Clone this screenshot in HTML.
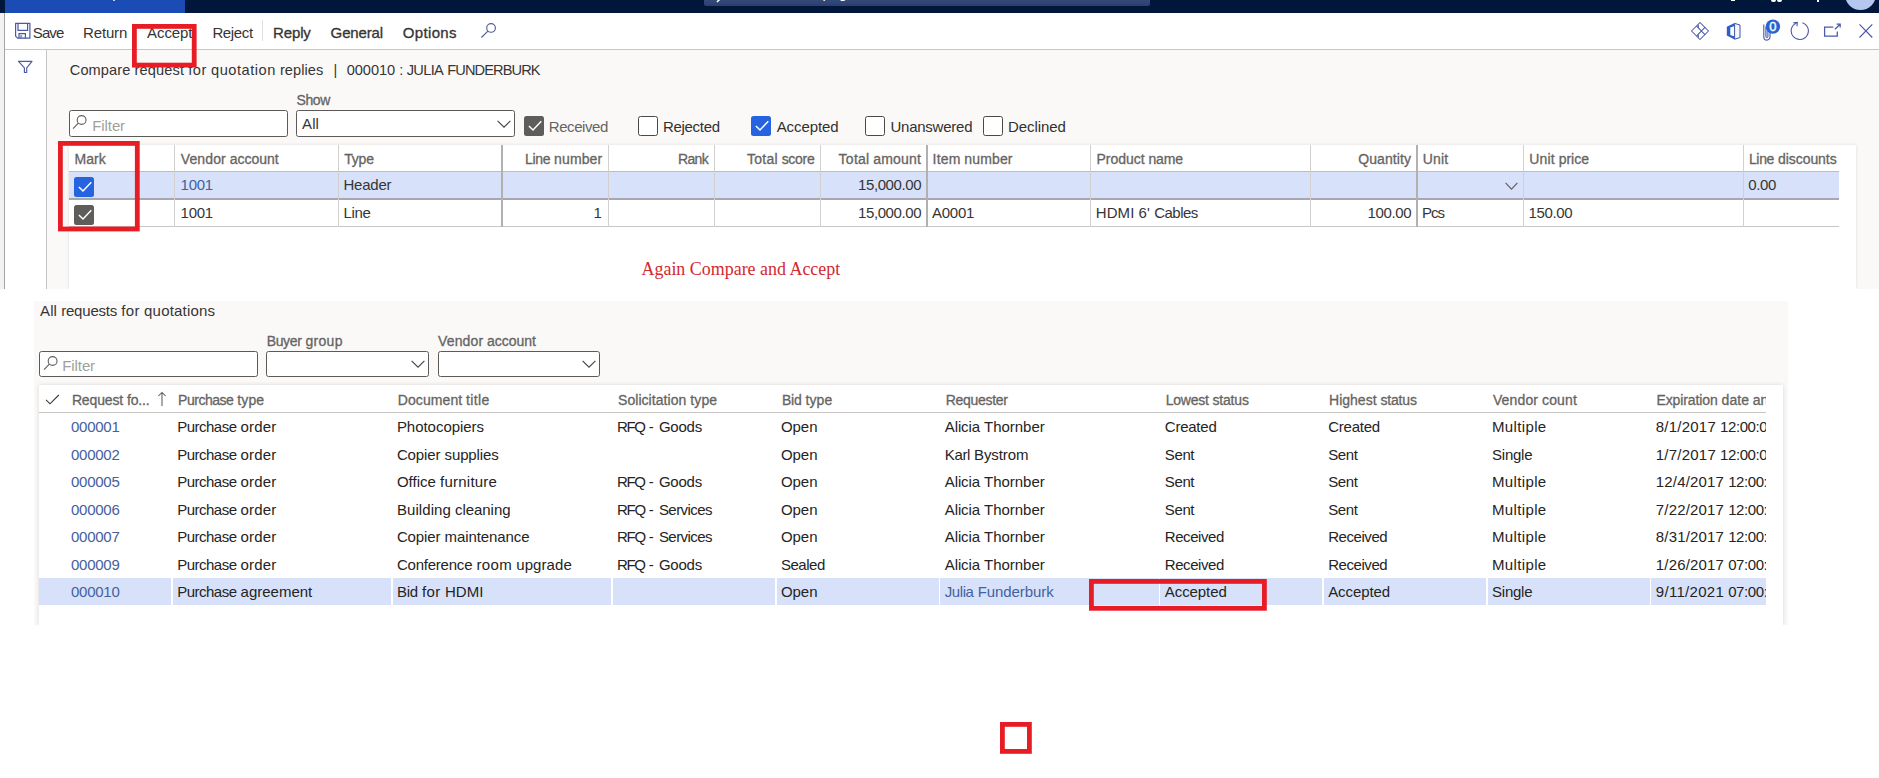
<!DOCTYPE html>
<html lang="en"><head><meta charset="utf-8"><title>Compare request for quotation replies</title>
<style>
html,body{margin:0;padding:0;background:#fff;}
body{width:1879px;height:778px;position:relative;overflow:hidden;font-family:"Liberation Sans",sans-serif;}
.b{position:absolute;display:block;}
.t{position:absolute;white-space:nowrap;line-height:20px;font-family:"Liberation Sans",sans-serif;}
.sb{-webkit-text-stroke:0.32px currentColor;}
.lb{-webkit-text-stroke:0.3px currentColor;}
</style></head><body>
<div class="b" style="left:0.00px;top:0.00px;width:1879.00px;height:12.50px;background:#00163a;overflow:hidden;"><div class="b" style="left:5px;top:0;width:180px;height:12.5px;background:#1b4bb4"></div><div class="b" style="left:112.6px;top:-1px;width:2px;height:1.8px;background:#fff;border-radius:1px"></div><div class="b" style="left:704px;top:0;width:446px;height:6px;background:linear-gradient(#334a7c,#2a3f6c);border-radius:0 0 2px 2px"></div><span class="t" style="left:739.5px;top:-16.7px;font-size:14.5px;color:#fff;">Search for a page</span><svg class="b" style="left:715.5px;top:-11px" width="14" height="14" viewBox="0 0 14 14"><circle cx="8.5" cy="5.5" r="4.2" fill="none" stroke="#fff" stroke-width="1.3"/><path d="M5.5 8.5 L1 13" stroke="#fff" stroke-width="1.5"/></svg><div class="b" style="left:1731px;top:-1px;width:4px;height:2px;background:#fff"></div><div class="b" style="left:1771px;top:-3px;width:5px;height:4.5px;background:#fff;border-radius:2px"></div><div class="b" style="left:1776.6px;top:-3px;width:5px;height:4.5px;background:#fff;border-radius:2px"></div><div class="b" style="left:1817px;top:-1px;width:2.4px;height:2.6px;background:#fff"></div><div class="b" style="left:1845px;top:-21.3px;width:31.4px;height:31.4px;background:#b4c7f1;border-radius:16px"></div></div>
<div class="b" style="left:0.00px;top:12.50px;width:5.00px;height:276.50px;background:#f3f2f1;border-right:1px solid #a6a4a2;box-sizing:border-box;"></div>
<div class="b" style="left:5.00px;top:12.50px;width:1874.00px;height:37.50px;background:#fff;border-bottom:1px solid #c8c6c4;box-sizing:border-box;"></div>
<div class="b" style="left:5.00px;top:50.00px;width:42.00px;height:239.00px;background:#fff;border-right:1px solid #c8c6c4;box-sizing:border-box;"></div>
<div class="b" style="left:47.00px;top:50.00px;width:1832.00px;height:239.00px;background:#faf9f8;"></div>
<svg class="b" style="left:14.00px;top:22.00px;" width="18" height="18" viewBox="0 0 18 18"><path d="M1.6 1.4 H15.9 V16.2 H3.6 L1.6 14.2 Z" fill="none" stroke="#4b59a8" stroke-width="1.2" stroke-linejoin="round"/><path d="M4 1.4 V8.4 H13.6 V1.4" fill="none" stroke="#4b59a8" stroke-width="1.2"/><path d="M5 16.2 V11.6 H11.4 V16.2" fill="none" stroke="#4b59a8" stroke-width="1.2"/><rect x="6.2" y="13" width="2" height="3" fill="#4b59a8" opacity=".6"/></svg>
<span class="t" style="top:22.60px;font-size:15.0px;color:#363534;letter-spacing:-0.893px;left:32.80px;">Save</span>
<span class="t" style="top:22.60px;font-size:15.0px;color:#363534;letter-spacing:-0.166px;left:83.10px;">Return</span>
<span class="t" style="top:22.60px;font-size:15.0px;color:#363534;letter-spacing:-0.098px;left:147.10px;">Accept</span>
<span class="t" style="top:22.60px;font-size:15.0px;color:#363534;letter-spacing:-0.369px;left:212.40px;">Reject</span>
<div class="b" style="left:262.00px;top:19.50px;width:1.00px;height:21.00px;background:#e1dfdd;"></div>
<span class="t sb" style="top:22.60px;font-size:15.0px;color:#363534;letter-spacing:-0.153px;left:273.10px;">Reply</span>
<span class="t sb" style="top:22.60px;font-size:15.0px;color:#363534;letter-spacing:-0.134px;left:330.60px;">General</span>
<span class="t sb" style="top:22.60px;font-size:15.0px;color:#363534;letter-spacing:0.335px;left:402.80px;">Options</span>
<svg class="b" style="left:480.00px;top:22.00px;" width="18" height="18" viewBox="0 0 18 18"><circle cx="11.05" cy="5.9" r="4.35" fill="none" stroke="#585b9e" stroke-width="1.15"/><path d="M7.9 9.1 L1.4 15.5" stroke="#585b9e" stroke-width="1.2"/></svg>
<svg class="b" style="left:1691.00px;top:22.00px;" width="18" height="18" viewBox="0 0 18 18"><g fill="none" stroke="#4b59a8" stroke-width="1.05" stroke-linejoin="round"><path d="M0.5 9 L9 0.5 L17.5 9 L9 17.5 Z"/><path d="M5.6 4.2 L14.2 12.8 M14.2 5.2 L5.6 13.8"/><path d="M7.4 2.6 L7.2 5.8 M7.2 12.2 L7.4 15.6"/></g></svg>
<svg class="b" style="left:1726.00px;top:22.00px;" width="16" height="18" viewBox="0 0 16 18"><path d="M0.8 4.7 L8.6 1.0 V3.9 L4.3 5.5 V13.0 L8.6 14.4 V17.4 L0.8 13.6 Z" fill="#2b5fc9"/><path d="M8.6 1.4 L14.0 3.0 V15.6 L8.6 17.2 Z" fill="#f4f7ff" stroke="#3e52a8" stroke-width="1"/></svg>
<svg class="b" style="left:1760.00px;top:18.00px;" width="24" height="24" viewBox="0 0 24 24"><path d="M3.8 6.4 V19 a3.1 3.1 0 0 0 6.2 0 V9" fill="none" stroke="#4b59a8" stroke-width="1.1"/><path d="M5.8 9 V18.6 a1.1 1.1 0 0 0 2.2 0 V9 Z" fill="#b9c6ee" stroke="#4b59a8" stroke-width="0.9"/><circle cx="12.9" cy="8.6" r="7.2" fill="#2a62d0"/><text x="12.9" y="13.2" style="font-family:'Liberation Sans',sans-serif;font-size:13px" fill="#fff" stroke="#fff" stroke-width="0.35" text-anchor="middle">0</text></svg>
<svg class="b" style="left:1790.00px;top:21.00px;" width="20" height="20" viewBox="0 0 20 20"><g fill="none" stroke="#4b59a8" stroke-width="1.1"><path d="M12.4 1.7 A8.6 8.6 0 1 1 6.6 1.9"/><path d="M3.2 1.7 L7.3 1.4 L7.0 5.2"/></g></svg>
<svg class="b" style="left:1822.00px;top:22.00px;" width="20" height="18" viewBox="0 0 20 18"><g fill="none" stroke="#4b59a8" stroke-width="1.25"><path d="M11.3 5 H2.6 V14 H15.3 V9.4"/><path d="M12.9 7.3 L18.2 2.2 M14.6 2.2 H18.2 V5.5"/></g></svg>
<svg class="b" style="left:1858.00px;top:23.00px;" width="16" height="16" viewBox="0 0 16 16"><path d="M1.5 1.3 L14.3 14.5 M14.3 1.3 L1.5 14.5" stroke="#4b59a8" stroke-width="1.15" fill="none"/></svg>
<svg class="b" style="left:17.00px;top:59.00px;" width="18" height="16" viewBox="0 0 18 16"><path d="M1.5 2.3 H15 L9.7 8.8 V13.5 H7.4 V8.8 Z" fill="none" stroke="#4b59a8" stroke-width="1.15" stroke-linejoin="round"/></svg>
<span class="t" style="top:59.54px;font-size:14.6px;color:#363534;letter-spacing:0.054px;left:69.80px;"><span style="letter-spacing:0.075px">Compare</span> <span style="letter-spacing:0.134px">request</span> <span style="letter-spacing:0.558px">for</span> <span style="letter-spacing:0.524px">quotation</span> <span style="letter-spacing:0.050px">replies</span></span>
<span class="t" style="top:59.54px;font-size:14.6px;color:#363534;letter-spacing:-0.216px;left:333.60px;">|</span>
<span class="t" style="top:59.54px;font-size:14.6px;color:#363534;letter-spacing:0.055px;left:346.70px;"><span style="letter-spacing:-0.032px">000010</span> <span style="letter-spacing:-0.802px">:</span> <span style="letter-spacing:-0.672px">JULIA</span> <span style="letter-spacing:-0.887px">FUNDERBURK</span></span>
<div class="b" style="left:69.00px;top:110.00px;width:219.00px;height:27.00px;background:#fff;border:1px solid #5b5a58;border-radius:2.5px;box-sizing:border-box;"></div>
<svg class="b" style="left:71.60px;top:114.00px;" width="16" height="16" viewBox="0 0 16 16"><circle cx="9.6" cy="6" r="4.4" fill="none" stroke="#605e5c" stroke-width="1.1"/><path d="M6.4 9.2 L1 14.6" stroke="#605e5c" stroke-width="1.1"/></svg>
<span class="t" style="top:115.60px;font-size:15px;color:#a19f9d;letter-spacing:-0.102px;left:92.30px;">Filter</span>
<span class="t lb" style="top:90.45px;font-size:14.0px;color:#666462;letter-spacing:-0.347px;left:296.40px;">Show</span>
<div class="b" style="left:296.00px;top:110.00px;width:218.60px;height:27.00px;background:#fff;border:1px solid #5b5a58;border-radius:2.5px;box-sizing:border-box;"></div>
<span class="t" style="top:113.50px;font-size:15.0px;color:#363534;letter-spacing:0.090px;left:302.10px;">All</span>
<svg class="b" style="left:497.00px;top:120.00px;" width="14" height="8" viewBox="0 0 14 8"><path d="M0.6 0.8 L7.0 7.1 L13.4 0.8" fill="none" stroke="#484644" stroke-width="1.15"/></svg>
<div class="b" style="left:524.00px;top:116.20px;width:20.00px;height:20.00px;background:#5f5d5b;border-radius:2.5px;"><svg width="20" height="20" viewBox="0 0 20 20" style="display:block"><path d="M4.9 9.9 L9 14 L17.3 5.3" fill="none" stroke="#fff" stroke-width="1.45"/></svg></div>
<span class="t" style="top:116.50px;font-size:15.0px;color:#666462;letter-spacing:-0.433px;left:548.80px;">Received</span>
<div class="b" style="left:637.70px;top:116.20px;width:20.00px;height:20.00px;background:#fff;border:1px solid #4a4948;border-radius:2.5px;box-sizing:border-box;"></div>
<span class="t" style="top:116.50px;font-size:15.0px;color:#323130;letter-spacing:-0.280px;left:662.90px;">Rejected</span>
<div class="b" style="left:751.00px;top:116.20px;width:20.00px;height:20.00px;background:#2563e0;border-radius:2.5px;"><svg width="20" height="20" viewBox="0 0 20 20" style="display:block"><path d="M4.9 9.9 L9 14 L17.3 5.3" fill="none" stroke="#fff" stroke-width="1.45"/></svg></div>
<span class="t" style="top:116.50px;font-size:15.0px;color:#323130;letter-spacing:-0.075px;left:776.70px;">Accepted</span>
<div class="b" style="left:864.80px;top:116.20px;width:20.00px;height:20.00px;background:#fff;border:1px solid #4a4948;border-radius:2.5px;box-sizing:border-box;"></div>
<span class="t" style="top:116.50px;font-size:15.0px;color:#323130;letter-spacing:-0.247px;left:890.50px;">Unanswered</span>
<div class="b" style="left:983.00px;top:116.20px;width:20.00px;height:20.00px;background:#fff;border:1px solid #4a4948;border-radius:2.5px;box-sizing:border-box;"></div>
<span class="t" style="top:116.50px;font-size:15.0px;color:#323130;letter-spacing:-0.087px;left:1008.00px;">Declined</span>
<div class="b" style="left:69.00px;top:144.50px;width:1787.00px;height:144.50px;background:#fff;box-shadow:0 0 3px rgba(0,0,0,.12);"></div>
<div class="b" style="left:69.00px;top:172.00px;width:1770.00px;height:27.00px;background:#d7e2fa;"></div>
<div class="b" style="left:69.00px;top:171.00px;width:1770.00px;height:1.00px;background:#b9bdc9;"></div>
<div class="b" style="left:69.00px;top:198.00px;width:1770.00px;height:2.00px;background:#a6a8b0;"></div>
<div class="b" style="left:69.00px;top:226.00px;width:1770.00px;height:1.00px;background:#c8c6c4;"></div>
<div class="b" style="left:173.90px;top:144.50px;width:1.00px;height:82.00px;background:#d2d0ce;"></div>
<div class="b" style="left:337.70px;top:144.50px;width:1.00px;height:82.00px;background:#d2d0ce;"></div>
<div class="b" style="left:500.70px;top:144.50px;width:1.90px;height:82.00px;background:#b3b1af;"></div>
<div class="b" style="left:607.80px;top:144.50px;width:1.00px;height:82.00px;background:#d2d0ce;"></div>
<div class="b" style="left:713.80px;top:144.50px;width:1.00px;height:82.00px;background:#d2d0ce;"></div>
<div class="b" style="left:820.00px;top:144.50px;width:1.00px;height:82.00px;background:#d2d0ce;"></div>
<div class="b" style="left:926.10px;top:144.50px;width:1.90px;height:82.00px;background:#b3b1af;"></div>
<div class="b" style="left:1089.80px;top:144.50px;width:1.00px;height:82.00px;background:#d2d0ce;"></div>
<div class="b" style="left:1310.20px;top:144.50px;width:1.00px;height:82.00px;background:#d2d0ce;"></div>
<div class="b" style="left:1415.90px;top:144.50px;width:1.90px;height:82.00px;background:#b3b1af;"></div>
<div class="b" style="left:1522.80px;top:144.50px;width:1.00px;height:82.00px;background:#d2d0ce;"></div>
<div class="b" style="left:1742.90px;top:144.50px;width:1.00px;height:82.00px;background:#d2d0ce;"></div>
<span class="t lb" style="top:148.55px;font-size:14.0px;color:#666462;letter-spacing:0.100px;left:74.40px;">Mark</span>
<span class="t lb" style="top:148.55px;font-size:14.0px;color:#666462;letter-spacing:-0.057px;left:180.70px;"><span style="letter-spacing:0.141px">Vendor</span> <span style="letter-spacing:-0.034px">account</span></span>
<span class="t lb" style="top:148.55px;font-size:14.0px;color:#666462;letter-spacing:-0.183px;left:344.20px;">Type</span>
<span class="t lb" style="top:148.55px;font-size:14.0px;color:#666462;letter-spacing:-0.058px;right:1276.66px;"><span style="letter-spacing:-0.321px">Line</span> <span style="letter-spacing:0.136px">number</span></span>
<span class="t lb" style="top:148.55px;font-size:14.0px;color:#666462;letter-spacing:-0.585px;right:1170.78px;">Rank</span>
<span class="t lb" style="top:148.55px;font-size:14.0px;color:#666462;letter-spacing:-0.057px;right:1064.59px;"><span style="letter-spacing:0.245px">Total</span> <span style="letter-spacing:-0.288px">score</span></span>
<span class="t lb" style="top:148.55px;font-size:14.0px;color:#666462;letter-spacing:-0.058px;right:957.79px;"><span style="letter-spacing:0.244px">Total</span> <span style="letter-spacing:0.210px">amount</span></span>
<span class="t lb" style="top:148.55px;font-size:14.0px;color:#666462;letter-spacing:-0.057px;left:932.60px;"><span style="letter-spacing:0.163px">Item</span> <span style="letter-spacing:0.137px">number</span></span>
<span class="t lb" style="top:148.55px;font-size:14.0px;color:#666462;letter-spacing:-0.056px;left:1096.40px;"><span style="letter-spacing:-0.001px">Product</span> <span style="letter-spacing:-0.147px">name</span></span>
<span class="t lb" style="top:148.55px;font-size:14.0px;color:#666462;letter-spacing:0.119px;right:467.78px;">Quantity</span>
<span class="t lb" style="top:148.55px;font-size:14.0px;color:#666462;letter-spacing:0.186px;left:1422.70px;">Unit</span>
<span class="t lb" style="top:148.55px;font-size:14.0px;color:#666462;letter-spacing:-0.057px;left:1529.20px;"><span style="letter-spacing:0.186px">Unit</span> <span style="letter-spacing:-0.017px">price</span></span>
<span class="t lb" style="top:148.55px;font-size:14.0px;color:#666462;letter-spacing:-0.056px;left:1748.90px;"><span style="letter-spacing:-0.319px">Line</span> <span style="letter-spacing:-0.049px">discounts</span></span>
<div class="b" style="left:74.20px;top:177.00px;width:20.00px;height:20.00px;background:#2563e0;border-radius:2.5px;"><svg width="20" height="20" viewBox="0 0 20 20" style="display:block"><path d="M4.9 9.9 L9 14 L17.3 5.3" fill="none" stroke="#fff" stroke-width="1.45"/></svg></div>
<div class="b" style="left:74.20px;top:205.10px;width:20.00px;height:20.00px;background:#5f5d5b;border-radius:2.5px;"><svg width="20" height="20" viewBox="0 0 20 20" style="display:block"><path d="M4.9 9.9 L9 14 L17.3 5.3" fill="none" stroke="#fff" stroke-width="1.45"/></svg></div>
<span class="t" style="top:175.10px;font-size:15.0px;color:#44609e;letter-spacing:-0.260px;left:180.60px;">1001</span>
<span class="t" style="top:175.10px;font-size:15.0px;color:#363534;letter-spacing:-0.202px;left:343.40px;">Header</span>
<span class="t" style="top:175.10px;font-size:15.0px;color:#363534;letter-spacing:-0.403px;right:957.90px;">15,000.00</span>
<span class="t" style="top:175.10px;font-size:15.0px;color:#363534;letter-spacing:-0.423px;left:1748.30px;">0.00</span>
<svg class="b" style="left:1505.30px;top:181.80px;" width="13" height="8" viewBox="0 0 13 8"><path d="M0.6 0.8 L6.5 7.1 L12.4 0.8" fill="none" stroke="#605e5c" stroke-width="1.15"/></svg>
<span class="t" style="top:202.90px;font-size:15.0px;color:#363534;letter-spacing:-0.260px;left:180.60px;">1001</span>
<span class="t" style="top:202.90px;font-size:15.0px;color:#363534;letter-spacing:-0.343px;left:343.40px;">Line</span>
<span class="t" style="top:202.90px;font-size:15.0px;color:#363534;letter-spacing:-0.264px;right:1277.36px;">1</span>
<span class="t" style="top:202.90px;font-size:15.0px;color:#363534;letter-spacing:-0.403px;right:957.90px;">15,000.00</span>
<span class="t" style="top:202.90px;font-size:15.0px;color:#363534;letter-spacing:-0.271px;left:932.00px;">A0001</span>
<span class="t" style="top:202.90px;font-size:15.0px;color:#363534;letter-spacing:-0.059px;left:1095.80px;"><span style="letter-spacing:0.075px">HDMI</span> <span style="letter-spacing:0.186px">6'</span> <span style="letter-spacing:-0.519px">Cables</span></span>
<span class="t" style="top:202.90px;font-size:15.0px;color:#363534;letter-spacing:-0.367px;right:467.77px;">100.00</span>
<span class="t" style="top:202.90px;font-size:15.0px;color:#363534;letter-spacing:-1.104px;left:1422.10px;">Pcs</span>
<span class="t" style="top:202.90px;font-size:15.0px;color:#363534;letter-spacing:-0.367px;left:1528.60px;">150.00</span>
<span class="t" style="left:641.5px;top:257.44px;line-height:24px;font-family:'Liberation Serif',serif;font-size:17.95px;color:#d4282e;">Again Compare and Accept</span>
<div class="b" style="left:0.00px;top:289.00px;width:1879.00px;height:12.00px;background:#fff;"></div>
<div class="b" style="left:34.00px;top:301.00px;width:1754.00px;height:324.00px;background:#faf9f8;"></div>
<span class="t" style="top:300.70px;font-size:15.0px;color:#363534;letter-spacing:-0.059px;left:40.10px;"><span style="letter-spacing:0.089px">All</span> <span style="letter-spacing:-0.194px">requests</span> <span style="letter-spacing:0.400px">for</span> <span style="letter-spacing:0.191px">quotations</span></span>
<div class="b" style="left:39.00px;top:351.00px;width:219.00px;height:26.00px;background:#fff;border:1px solid #5b5a58;border-radius:2.5px;box-sizing:border-box;"></div>
<svg class="b" style="left:42.50px;top:354.90px;" width="16" height="16" viewBox="0 0 16 16"><circle cx="9.6" cy="6" r="4.4" fill="none" stroke="#605e5c" stroke-width="1.1"/><path d="M6.4 9.2 L1 14.6" stroke="#605e5c" stroke-width="1.1"/></svg>
<span class="t" style="top:355.60px;font-size:15px;color:#a19f9d;letter-spacing:-0.102px;left:62.30px;">Filter</span>
<span class="t lb" style="top:331.05px;font-size:14.0px;color:#666462;letter-spacing:-0.056px;left:266.70px;"><span style="letter-spacing:-0.346px">Buyer</span> <span style="letter-spacing:0.324px">group</span></span>
<div class="b" style="left:266.00px;top:351.00px;width:162.50px;height:26.00px;background:#fff;border:1px solid #5b5a58;border-radius:2.5px;box-sizing:border-box;"></div>
<svg class="b" style="left:411.00px;top:360.00px;" width="14" height="8" viewBox="0 0 14 8"><path d="M0.6 0.8 L7.0 7.1 L13.4 0.8" fill="none" stroke="#484644" stroke-width="1.15"/></svg>
<span class="t lb" style="top:331.05px;font-size:14.0px;color:#666462;letter-spacing:-0.057px;left:438.00px;"><span style="letter-spacing:0.141px">Vendor</span> <span style="letter-spacing:-0.034px">account</span></span>
<div class="b" style="left:438.00px;top:351.00px;width:161.70px;height:26.00px;background:#fff;border:1px solid #5b5a58;border-radius:2.5px;box-sizing:border-box;"></div>
<svg class="b" style="left:582.00px;top:360.00px;" width="14" height="8" viewBox="0 0 14 8"><path d="M0.6 0.8 L7.0 7.1 L13.4 0.8" fill="none" stroke="#484644" stroke-width="1.15"/></svg>
<div class="b" style="left:39.00px;top:385.00px;width:1744.00px;height:240.00px;background:#fff;box-shadow:0 0 4px rgba(0,0,0,.14);"></div>
<div class="b" style="left:39.00px;top:412.20px;width:1727.00px;height:1.00px;background:#c8c6c4;"></div>
<svg class="b" style="left:45.00px;top:394.00px;" width="15" height="11" viewBox="0 0 15 11"><path d="M1 5.8 L5 9.8 L13.8 1" fill="none" stroke="#3b3a39" stroke-width="1.1"/></svg>
<span class="t lb" style="top:389.65px;font-size:14.0px;color:#666462;letter-spacing:0.051px;left:71.90px;"><span style="letter-spacing:-0.134px">Request</span> <span style="letter-spacing:-0.208px">fo...</span></span>
<span class="t lb" style="top:389.65px;font-size:14.0px;color:#666462;letter-spacing:-0.057px;left:178.10px;"><span style="letter-spacing:-0.478px">Purchase</span> <span style="letter-spacing:0.142px">type</span></span>
<span class="t lb" style="top:389.65px;font-size:14.0px;color:#666462;letter-spacing:-0.057px;left:397.80px;"><span style="letter-spacing:0.079px">Document</span> <span style="letter-spacing:0.359px">title</span></span>
<span class="t lb" style="top:389.65px;font-size:14.0px;color:#666462;letter-spacing:-0.057px;left:618.00px;"><span style="letter-spacing:0.056px">Solicitation</span> <span style="letter-spacing:0.143px">type</span></span>
<span class="t lb" style="top:389.65px;font-size:14.0px;color:#666462;letter-spacing:-0.056px;left:781.90px;"><span style="letter-spacing:-0.198px">Bid</span> <span style="letter-spacing:0.143px">type</span></span>
<span class="t lb" style="top:389.65px;font-size:14.0px;color:#666462;letter-spacing:-0.289px;left:945.70px;">Requester</span>
<span class="t lb" style="top:389.65px;font-size:14.0px;color:#666462;letter-spacing:-0.057px;left:1165.70px;"><span style="letter-spacing:-0.244px">Lowest</span> <span style="letter-spacing:-0.163px">status</span></span>
<span class="t lb" style="top:389.65px;font-size:14.0px;color:#666462;letter-spacing:-0.057px;left:1329.10px;"><span style="letter-spacing:-0.003px">Highest</span> <span style="letter-spacing:-0.163px">status</span></span>
<span class="t lb" style="top:389.65px;font-size:14.0px;color:#666462;letter-spacing:-0.057px;left:1492.90px;"><span style="letter-spacing:0.141px">Vendor</span> <span style="letter-spacing:0.192px">count</span></span>
<span class="t lb" style="top:389.65px;font-size:14.0px;color:#666462;letter-spacing:-0.057px;left:1656.40px;width:109.60px;overflow:hidden;"><span style="letter-spacing:-0.092px">Expiration</span> <span style="letter-spacing:0.040px">date</span> <span style="letter-spacing:-0.039px">and</span> <span style="letter-spacing:0.274px">time</span></span>
<svg class="b" style="left:156.00px;top:391.00px;" width="12" height="16" viewBox="0 0 12 16"><path d="M6 15 V1.4 M2.4 5 L6 1.4 L9.6 5" fill="none" stroke="#605e5c" stroke-width="1.05"/></svg>
<div class="b" style="left:39.00px;top:578.20px;width:1727.00px;height:26.60px;background:#d7e2fa;"></div>
<div class="b" style="left:171.10px;top:578.20px;width:1.80px;height:26.60px;background:#fff;"></div>
<div class="b" style="left:390.80px;top:578.20px;width:1.80px;height:26.60px;background:#fff;"></div>
<div class="b" style="left:611.00px;top:578.20px;width:1.80px;height:26.60px;background:#fff;"></div>
<div class="b" style="left:774.90px;top:578.20px;width:1.80px;height:26.60px;background:#fff;"></div>
<div class="b" style="left:938.70px;top:578.20px;width:1.80px;height:26.60px;background:#fff;"></div>
<div class="b" style="left:1158.70px;top:578.20px;width:1.80px;height:26.60px;background:#fff;"></div>
<div class="b" style="left:1322.10px;top:578.20px;width:1.80px;height:26.60px;background:#fff;"></div>
<div class="b" style="left:1485.90px;top:578.20px;width:1.80px;height:26.60px;background:#fff;"></div>
<div class="b" style="left:1649.70px;top:578.20px;width:1.80px;height:26.60px;background:#fff;"></div>
<span class="t" style="top:416.80px;font-size:15.0px;color:#44609e;letter-spacing:-0.259px;left:71.00px;">000001</span>
<span class="t" style="top:416.80px;font-size:15.0px;color:#252423;letter-spacing:-0.060px;left:177.20px;"><span style="letter-spacing:-0.511px">Purchase</span> <span style="letter-spacing:0.171px">order</span></span>
<span class="t" style="top:416.80px;font-size:15.0px;color:#252423;letter-spacing:-0.034px;left:396.90px;">Photocopiers</span>
<span class="t" style="top:416.80px;font-size:15.0px;color:#252423;letter-spacing:-0.061px;left:617.10px;"><span style="letter-spacing:-1.357px">RFQ</span> <span style="letter-spacing:1.001px">-</span> <span style="letter-spacing:-0.225px">Goods</span></span>
<span class="t" style="top:416.80px;font-size:15.0px;color:#252423;letter-spacing:-0.070px;left:781.00px;">Open</span>
<span class="t" style="top:416.80px;font-size:15.0px;color:#252423;letter-spacing:-0.060px;left:944.80px;"><span style="letter-spacing:-0.120px">Alicia</span> <span style="letter-spacing:-0.027px">Thornber</span></span>
<span class="t" style="top:416.80px;font-size:15.0px;color:#252423;letter-spacing:-0.236px;left:1164.80px;">Created</span>
<span class="t" style="top:416.80px;font-size:15.0px;color:#252423;letter-spacing:-0.236px;left:1328.20px;">Created</span>
<span class="t" style="top:416.80px;font-size:15.0px;color:#252423;letter-spacing:0.360px;left:1492.00px;">Multiple</span>
<span class="t" style="top:416.80px;font-size:15.0px;color:#252423;letter-spacing:-0.060px;left:1655.80px;width:110.20px;overflow:hidden;"><span style="letter-spacing:0.226px">8/1/2017</span> <span style="letter-spacing:-0.423px">12:00:00</span> <span style="letter-spacing:0.321px">AM</span></span>
<span class="t" style="top:444.80px;font-size:15.0px;color:#44609e;letter-spacing:-0.259px;left:71.00px;">000002</span>
<span class="t" style="top:444.80px;font-size:15.0px;color:#252423;letter-spacing:-0.060px;left:177.20px;"><span style="letter-spacing:-0.511px">Purchase</span> <span style="letter-spacing:0.171px">order</span></span>
<span class="t" style="top:444.80px;font-size:15.0px;color:#252423;letter-spacing:-0.060px;left:396.90px;"><span style="letter-spacing:-0.100px">Copier</span> <span style="letter-spacing:-0.139px">supplies</span></span>
<span class="t" style="top:444.80px;font-size:15.0px;color:#252423;letter-spacing:-0.070px;left:781.00px;">Open</span>
<span class="t" style="top:444.80px;font-size:15.0px;color:#252423;letter-spacing:-0.059px;left:944.80px;"><span style="letter-spacing:-0.376px">Karl</span> <span style="letter-spacing:-0.108px">Bystrom</span></span>
<span class="t" style="top:444.80px;font-size:15.0px;color:#252423;letter-spacing:-0.379px;left:1164.80px;">Sent</span>
<span class="t" style="top:444.80px;font-size:15.0px;color:#252423;letter-spacing:-0.379px;left:1328.20px;">Sent</span>
<span class="t" style="top:444.80px;font-size:15.0px;color:#252423;letter-spacing:-0.227px;left:1492.00px;">Single</span>
<span class="t" style="top:444.80px;font-size:15.0px;color:#252423;letter-spacing:-0.060px;left:1655.80px;width:110.20px;overflow:hidden;"><span style="letter-spacing:0.226px">1/7/2017</span> <span style="letter-spacing:-0.423px">12:00:00</span> <span style="letter-spacing:0.321px">AM</span></span>
<span class="t" style="top:471.80px;font-size:15.0px;color:#44609e;letter-spacing:-0.259px;left:71.00px;">000005</span>
<span class="t" style="top:471.80px;font-size:15.0px;color:#252423;letter-spacing:-0.060px;left:177.20px;"><span style="letter-spacing:-0.511px">Purchase</span> <span style="letter-spacing:0.171px">order</span></span>
<span class="t" style="top:471.80px;font-size:15.0px;color:#252423;letter-spacing:-0.060px;left:396.90px;"><span style="letter-spacing:0.031px">Office</span> <span style="letter-spacing:0.223px">furniture</span></span>
<span class="t" style="top:471.80px;font-size:15.0px;color:#252423;letter-spacing:-0.061px;left:617.10px;"><span style="letter-spacing:-1.357px">RFQ</span> <span style="letter-spacing:1.001px">-</span> <span style="letter-spacing:-0.225px">Goods</span></span>
<span class="t" style="top:471.80px;font-size:15.0px;color:#252423;letter-spacing:-0.070px;left:781.00px;">Open</span>
<span class="t" style="top:471.80px;font-size:15.0px;color:#252423;letter-spacing:-0.060px;left:944.80px;"><span style="letter-spacing:-0.120px">Alicia</span> <span style="letter-spacing:-0.027px">Thornber</span></span>
<span class="t" style="top:471.80px;font-size:15.0px;color:#252423;letter-spacing:-0.379px;left:1164.80px;">Sent</span>
<span class="t" style="top:471.80px;font-size:15.0px;color:#252423;letter-spacing:-0.379px;left:1328.20px;">Sent</span>
<span class="t" style="top:471.80px;font-size:15.0px;color:#252423;letter-spacing:0.360px;left:1492.00px;">Multiple</span>
<span class="t" style="top:471.80px;font-size:15.0px;color:#252423;letter-spacing:-0.060px;left:1655.80px;width:110.20px;overflow:hidden;"><span style="letter-spacing:0.172px">12/4/2017</span> <span style="letter-spacing:-0.422px">12:00:00</span> <span style="letter-spacing:0.321px">AM</span></span>
<span class="t" style="top:499.80px;font-size:15.0px;color:#44609e;letter-spacing:-0.259px;left:71.00px;">000006</span>
<span class="t" style="top:499.80px;font-size:15.0px;color:#252423;letter-spacing:-0.060px;left:177.20px;"><span style="letter-spacing:-0.511px">Purchase</span> <span style="letter-spacing:0.171px">order</span></span>
<span class="t" style="top:499.80px;font-size:15.0px;color:#252423;letter-spacing:-0.060px;left:396.90px;"><span style="letter-spacing:0.084px">Building</span> <span style="letter-spacing:-0.060px">cleaning</span></span>
<span class="t" style="top:499.80px;font-size:15.0px;color:#252423;letter-spacing:-0.060px;left:617.10px;"><span style="letter-spacing:-1.356px">RFQ</span> <span style="letter-spacing:1.002px">-</span> <span style="letter-spacing:-0.570px">Services</span></span>
<span class="t" style="top:499.80px;font-size:15.0px;color:#252423;letter-spacing:-0.070px;left:781.00px;">Open</span>
<span class="t" style="top:499.80px;font-size:15.0px;color:#252423;letter-spacing:-0.060px;left:944.80px;"><span style="letter-spacing:-0.120px">Alicia</span> <span style="letter-spacing:-0.027px">Thornber</span></span>
<span class="t" style="top:499.80px;font-size:15.0px;color:#252423;letter-spacing:-0.379px;left:1164.80px;">Sent</span>
<span class="t" style="top:499.80px;font-size:15.0px;color:#252423;letter-spacing:-0.379px;left:1328.20px;">Sent</span>
<span class="t" style="top:499.80px;font-size:15.0px;color:#252423;letter-spacing:0.360px;left:1492.00px;">Multiple</span>
<span class="t" style="top:499.80px;font-size:15.0px;color:#252423;letter-spacing:-0.060px;left:1655.80px;width:110.20px;overflow:hidden;"><span style="letter-spacing:0.172px">7/22/2017</span> <span style="letter-spacing:-0.422px">12:00:00</span> <span style="letter-spacing:0.321px">AM</span></span>
<span class="t" style="top:526.80px;font-size:15.0px;color:#44609e;letter-spacing:-0.259px;left:71.00px;">000007</span>
<span class="t" style="top:526.80px;font-size:15.0px;color:#252423;letter-spacing:-0.060px;left:177.20px;"><span style="letter-spacing:-0.511px">Purchase</span> <span style="letter-spacing:0.171px">order</span></span>
<span class="t" style="top:526.80px;font-size:15.0px;color:#252423;letter-spacing:-0.059px;left:396.90px;"><span style="letter-spacing:-0.099px">Copier</span> <span style="letter-spacing:-0.087px">maintenance</span></span>
<span class="t" style="top:526.80px;font-size:15.0px;color:#252423;letter-spacing:-0.060px;left:617.10px;"><span style="letter-spacing:-1.356px">RFQ</span> <span style="letter-spacing:1.002px">-</span> <span style="letter-spacing:-0.570px">Services</span></span>
<span class="t" style="top:526.80px;font-size:15.0px;color:#252423;letter-spacing:-0.070px;left:781.00px;">Open</span>
<span class="t" style="top:526.80px;font-size:15.0px;color:#252423;letter-spacing:-0.060px;left:944.80px;"><span style="letter-spacing:-0.120px">Alicia</span> <span style="letter-spacing:-0.027px">Thornber</span></span>
<span class="t" style="top:526.80px;font-size:15.0px;color:#252423;letter-spacing:-0.433px;left:1164.80px;">Received</span>
<span class="t" style="top:526.80px;font-size:15.0px;color:#252423;letter-spacing:-0.433px;left:1328.20px;">Received</span>
<span class="t" style="top:526.80px;font-size:15.0px;color:#252423;letter-spacing:0.360px;left:1492.00px;">Multiple</span>
<span class="t" style="top:526.80px;font-size:15.0px;color:#252423;letter-spacing:-0.060px;left:1655.80px;width:110.20px;overflow:hidden;"><span style="letter-spacing:0.172px">8/31/2017</span> <span style="letter-spacing:-0.422px">12:00:00</span> <span style="letter-spacing:0.321px">AM</span></span>
<span class="t" style="top:554.80px;font-size:15.0px;color:#44609e;letter-spacing:-0.259px;left:71.00px;">000009</span>
<span class="t" style="top:554.80px;font-size:15.0px;color:#252423;letter-spacing:-0.060px;left:177.20px;"><span style="letter-spacing:-0.511px">Purchase</span> <span style="letter-spacing:0.171px">order</span></span>
<span class="t" style="top:554.80px;font-size:15.0px;color:#252423;letter-spacing:-0.059px;left:396.90px;"><span style="letter-spacing:-0.218px">Conference</span> <span style="letter-spacing:0.400px">room</span> <span style="letter-spacing:0.078px">upgrade</span></span>
<span class="t" style="top:554.80px;font-size:15.0px;color:#252423;letter-spacing:-0.061px;left:617.10px;"><span style="letter-spacing:-1.357px">RFQ</span> <span style="letter-spacing:1.001px">-</span> <span style="letter-spacing:-0.225px">Goods</span></span>
<span class="t" style="top:554.80px;font-size:15.0px;color:#252423;letter-spacing:-0.495px;left:781.00px;">Sealed</span>
<span class="t" style="top:554.80px;font-size:15.0px;color:#252423;letter-spacing:-0.060px;left:944.80px;"><span style="letter-spacing:-0.120px">Alicia</span> <span style="letter-spacing:-0.027px">Thornber</span></span>
<span class="t" style="top:554.80px;font-size:15.0px;color:#252423;letter-spacing:-0.433px;left:1164.80px;">Received</span>
<span class="t" style="top:554.80px;font-size:15.0px;color:#252423;letter-spacing:-0.433px;left:1328.20px;">Received</span>
<span class="t" style="top:554.80px;font-size:15.0px;color:#252423;letter-spacing:0.360px;left:1492.00px;">Multiple</span>
<span class="t" style="top:554.80px;font-size:15.0px;color:#252423;letter-spacing:-0.060px;left:1655.80px;width:110.20px;overflow:hidden;"><span style="letter-spacing:0.172px">1/26/2017</span> <span style="letter-spacing:-0.422px">07:00:00</span> <span style="letter-spacing:0.321px">AM</span></span>
<span class="t" style="top:581.80px;font-size:15.0px;color:#44609e;letter-spacing:-0.259px;left:71.00px;">000010</span>
<span class="t" style="top:581.80px;font-size:15.0px;color:#252423;letter-spacing:-0.059px;left:177.20px;"><span style="letter-spacing:-0.510px">Purchase</span> <span style="letter-spacing:-0.003px">agreement</span></span>
<span class="t" style="top:581.80px;font-size:15.0px;color:#252423;letter-spacing:-0.059px;left:396.90px;"><span style="letter-spacing:-0.211px">Bid</span> <span style="letter-spacing:0.400px">for</span> <span style="letter-spacing:0.074px">HDMI</span></span>
<span class="t" style="top:581.80px;font-size:15.0px;color:#252423;letter-spacing:-0.070px;left:781.00px;">Open</span>
<span class="t" style="top:581.80px;font-size:15.0px;color:#44609e;letter-spacing:-0.059px;left:944.80px;"><span style="letter-spacing:-0.428px">Julia</span> <span style="letter-spacing:-0.066px">Funderburk</span></span>
<span class="t" style="top:581.80px;font-size:15.0px;color:#252423;letter-spacing:-0.075px;left:1164.80px;">Accepted</span>
<span class="t" style="top:581.80px;font-size:15.0px;color:#252423;letter-spacing:-0.075px;left:1328.20px;">Accepted</span>
<span class="t" style="top:581.80px;font-size:15.0px;color:#252423;letter-spacing:-0.227px;left:1492.00px;">Single</span>
<span class="t" style="top:581.80px;font-size:15.0px;color:#252423;letter-spacing:-0.060px;left:1655.80px;width:110.20px;overflow:hidden;"><span style="letter-spacing:0.296px">9/11/2021</span> <span style="letter-spacing:-0.422px">07:00:00</span> <span style="letter-spacing:0.321px">AM</span></span>
<div class="b" style="left:0.00px;top:625.00px;width:1879.00px;height:15.00px;background:#fff;"></div>
<svg class="b" style="left:132.20px;top:24.20px" width="64.60" height="43.50"><rect x="2.4" y="2.4" width="59.80" height="38.70" fill="none" stroke="#e81c24" stroke-width="4.8"/></svg>
<svg class="b" style="left:58.10px;top:141.20px" width="81.70" height="90.40"><rect x="2.4" y="2.4" width="76.90" height="85.60" fill="none" stroke="#e81c24" stroke-width="4.8"/></svg>
<svg class="b" style="left:1089.00px;top:579.00px" width="177.80" height="31.70"><rect x="2.4" y="2.4" width="173.00" height="26.90" fill="none" stroke="#e81c24" stroke-width="4.8"/></svg>
<svg class="b" style="left:1000.10px;top:722.00px" width="31.80" height="31.80"><rect x="2.4" y="2.4" width="27.00" height="27.00" fill="none" stroke="#e81c24" stroke-width="4.8"/></svg>
</body></html>
